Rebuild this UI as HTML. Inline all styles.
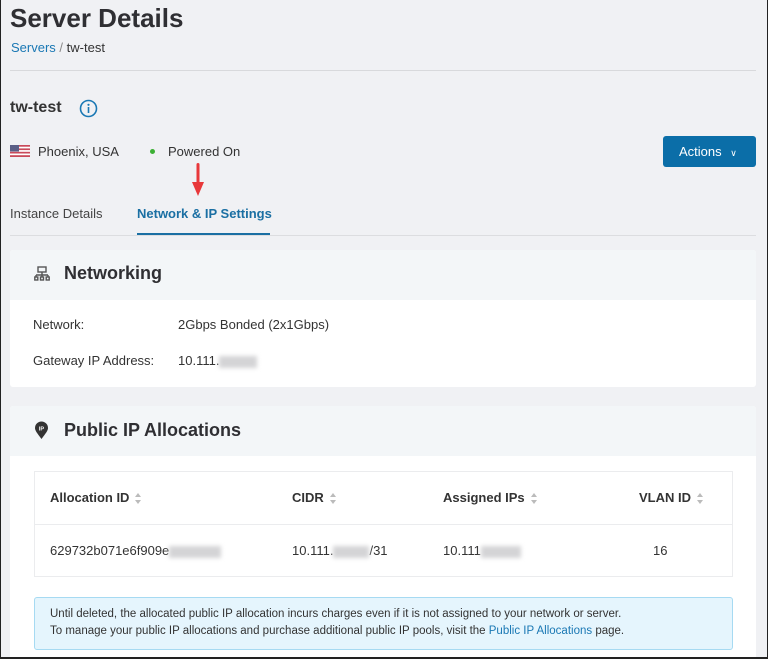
<!DOCTYPE html>
<html><head><meta charset="utf-8"><style>
*{box-sizing:border-box;margin:0;padding:0}
html,body{width:768px;height:659px;overflow:hidden}
body{background:#f0f1f4;font-family:"Liberation Sans",sans-serif;color:#333;position:relative;font-size:13px}
.frame{position:absolute;left:0;top:0;width:768px;height:659px;border-left:1px solid #222;border-right:1px solid #222;border-bottom:2px solid #222;pointer-events:none;z-index:10}
.a{position:absolute;white-space:nowrap}
.blur{display:inline-block;background:#d4d4d6;filter:blur(2px);height:12px;vertical-align:middle}
.sort{display:inline-block;margin-left:6px;vertical-align:middle;width:7px;height:11px;position:relative}
.sort:before{content:"";position:absolute;left:0;top:0;border-left:3.5px solid transparent;border-right:3.5px solid transparent;border-bottom:4px solid #bbb}
.sort:after{content:"";position:absolute;left:0;bottom:0;border-left:3.5px solid transparent;border-right:3.5px solid transparent;border-top:4px solid #bbb}
th{font-weight:bold}
</style></head><body>
<div class="frame"></div>
<div class="a" style="left:10px;top:3px;font-size:26px;font-weight:bold;color:#2f2f33">Server Details</div>
<div class="a" style="left:11px;top:40px;font-size:13px"><span style="color:#1a78b4">Servers</span> <span style="color:#888">/</span> tw-test</div>
<div class="a" style="left:10px;top:70px;width:746px;height:1px;background:#d8d9dc"></div>
<div class="a" style="left:10px;top:99px;font-size:16px;font-weight:bold;color:#333">tw-test</div>
<svg class="a" style="left:79px;top:99px" width="19" height="19" viewBox="0 0 19 19"><circle cx="9.5" cy="9.5" r="8" fill="none" stroke="#1a78b4" stroke-width="1.6"/><circle cx="9.5" cy="5.8" r="1.1" fill="#1a78b4"/><rect x="8.7" y="8" width="1.6" height="6" fill="#1a78b4"/></svg>
<svg class="a" style="left:10px;top:145px" width="20" height="12" viewBox="0 0 20 12"><rect width="20" height="12" fill="#fff"/><rect y="0" width="20" height="1.7" fill="#c94a5a"/><rect y="3.4" width="20" height="1.7" fill="#c94a5a"/><rect y="6.8" width="20" height="1.7" fill="#c94a5a"/><rect y="10.2" width="20" height="1.8" fill="#c94a5a"/><rect width="9" height="6.5" fill="#5a5f86"/></svg>
<div class="a" style="left:38px;top:144px;font-size:13px">Phoenix, USA</div>
<div class="a" style="left:150px;top:149px;width:5px;height:5px;border-radius:50%;background:#3cb034"></div>
<div class="a" style="left:168px;top:144px;font-size:13px">Powered On</div>
<div class="a" style="left:663px;top:136px;width:93px;height:31px;background:#0b6ea8;border-radius:3px;color:#fff;font-size:13px;line-height:31px;padding-left:16px">Actions <span style="font-size:9px;margin-left:5px">&#8744;</span></div>
<svg class="a" style="left:191px;top:163px" width="14" height="34" viewBox="0 0 14 34"><rect x="5.5" y="0" width="3" height="22" rx="1.5" fill="#e8383a"/><path d="M1 19 L13 19 L7 33 Z" fill="#e8383a"/></svg>
<div class="a" style="left:10px;top:206px;font-size:13px;color:#444">Instance Details</div>
<div class="a" style="left:137px;top:206px;font-size:13px;font-weight:bold;color:#1a6fa3">Network &amp; IP Settings</div>
<div class="a" style="left:10px;top:235px;width:746px;height:1px;background:#dcdde0"></div>
<div class="a" style="left:137px;top:233px;width:133px;height:2px;background:#1a6fa3"></div>

<div class="a" style="left:10px;top:250px;width:746px;height:137px;background:#fff;border-radius:3px;overflow:hidden">
 <div style="height:50px;background:#f3f6f8"></div>
</div>
<svg class="a" style="left:34px;top:266px" width="16" height="16" viewBox="0 0 16 16" fill="none" stroke="#555" stroke-width="1.4"><rect x="4" y="1" width="8" height="5"/><path d="M8 6v3M2 9h12M2 9v2M8 9v2M14 9v2"/><rect x="0.8" y="11" width="3" height="3"/><rect x="6.5" y="11" width="3" height="3"/><rect x="12.2" y="11" width="3" height="3"/></svg>
<div class="a" style="left:64px;top:263px;font-size:18px;font-weight:bold;color:#2f2f33">Networking</div>
<div class="a" style="left:33px;top:317px">Network:</div>
<div class="a" style="left:178px;top:317px">2Gbps Bonded (2x1Gbps)</div>
<div class="a" style="left:33px;top:353px">Gateway IP Address:</div>
<div class="a" style="left:178px;top:353px">10.111.<span class="blur" style="width:38px"></span></div>

<div class="a" style="left:10px;top:406px;width:746px;height:260px;background:#fff;border-radius:3px;overflow:hidden">
 <div style="height:50px;background:#f3f6f8"></div>
</div>
<svg class="a" style="left:34px;top:421px" width="15" height="19" viewBox="0 0 15 19"><path d="M7.5 18 C3 12 1 9.5 1 7 A6.5 6.5 0 0 1 14 7 C14 9.5 12 12 7.5 18Z" fill="#333"/><text x="7.5" y="9.5" font-size="5.5" font-family="Liberation Sans" font-weight="bold" fill="#fff" text-anchor="middle">IP</text></svg>
<div class="a" style="left:64px;top:420px;font-size:18px;font-weight:bold;color:#2f2f33">Public IP Allocations</div>

<div class="a" style="left:34px;top:471px;width:699px;height:106px;border:1px solid #ebecee;background:#fff">
 <div style="height:53px;border-bottom:1px solid #ebecee"></div>
</div>
<div class="a" style="left:50px;top:490px;font-weight:bold">Allocation ID<span class="sort"></span></div>
<div class="a" style="left:292px;top:490px;font-weight:bold">CIDR<span class="sort"></span></div>
<div class="a" style="left:443px;top:490px;font-weight:bold">Assigned IPs<span class="sort"></span></div>
<div class="a" style="left:639px;top:490px;font-weight:bold">VLAN ID<span class="sort"></span></div>
<div class="a" style="left:50px;top:543px">629732b071e6f909e<span class="blur" style="width:52px"></span></div>
<div class="a" style="left:292px;top:543px">10.111.<span class="blur" style="width:36px"></span>/31</div>
<div class="a" style="left:443px;top:543px">10.111<span class="blur" style="width:40px"></span></div>
<div class="a" style="left:653px;top:543px">16</div>

<div class="a" style="left:34px;top:597px;width:699px;height:53px;background:#e5f5fd;border:1px solid #a6daf2;border-radius:3px;font-size:11.5px;line-height:17px;padding:8px 0 0 15px;color:#333">Until deleted, the allocated public IP allocation incurs charges even if it is not assigned to your network or server.<br>To manage your public IP allocations and purchase additional public IP pools, visit the <span style="color:#1a78b4">Public IP Allocations</span> page.</div>
</body></html>
